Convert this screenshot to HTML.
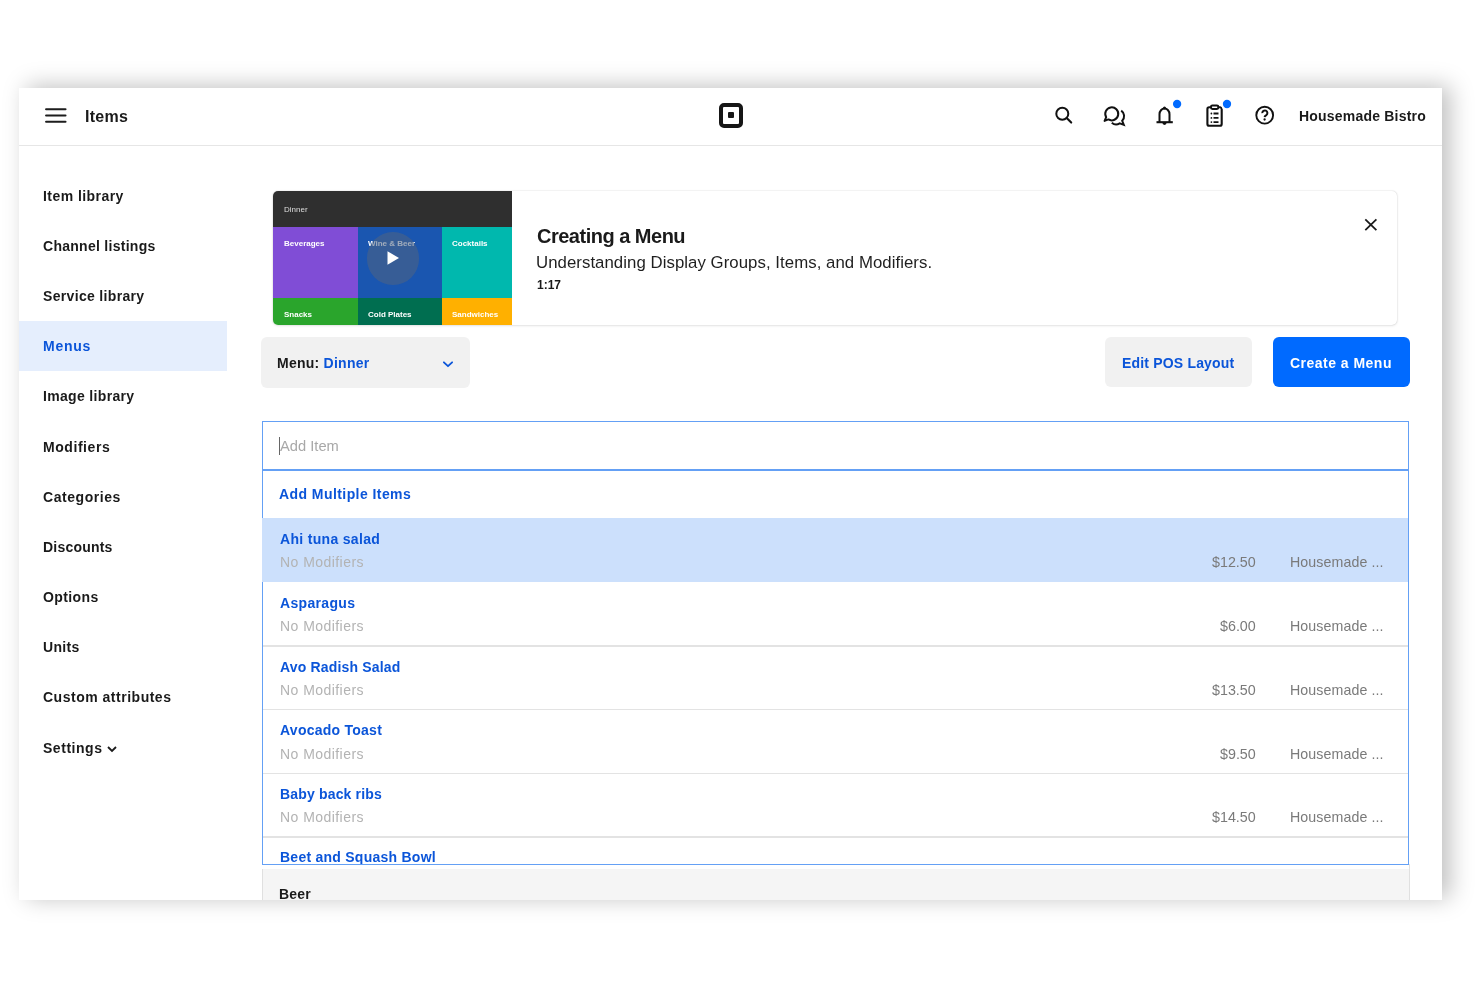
<!DOCTYPE html>
<html><head><meta charset="utf-8"><style>
html,body{margin:0;padding:0;}
body{width:1480px;height:987px;overflow:hidden;position:relative;background:#fff;font-family:"Liberation Sans", sans-serif;}
.t{position:absolute;line-height:1;white-space:nowrap;-webkit-font-smoothing:antialiased;will-change:transform;}
</style></head><body>
<div style="position:absolute;left:18.5px;top:88px;width:1423.5px;height:812px;background:#fff;box-shadow:8px -2px 22px rgba(0,0,0,0.25);"></div>
<div style="position:absolute;left:18.5px;top:144.6px;width:1423.5px;height:1.200000000000017px;background:#e6e6e6;"></div>
<svg style="position:absolute;left:40px;top:100px" width="32" height="30" viewBox="40 100 32 30"><path d="M46.1 109.3H65.5M46.1 115.5H65.5M46.1 121.8H65.5" stroke="#1d1d1d" stroke-width="2.1" stroke-linecap="round"/></svg>
<div class="t" style="left:85.30px;top:108.56px;font-size:16px;font-weight:700;color:#1a1a1a;letter-spacing:0.3px;">Items</div>
<div style="position:absolute;left:718.5px;top:102.8px;width:24.5px;height:25.0px;box-sizing:border-box;border:4.6px solid #161616;border-radius:5px;"></div>
<div style="position:absolute;left:727.8px;top:112.2px;width:6.0px;height:6.200000000000003px;background:#161616;border-radius:1px;"></div>
<svg style="position:absolute;left:1040px;top:92px" width="250" height="50" viewBox="1040 92 250 50" fill="none" stroke="#111" stroke-width="2">
<circle cx="1062.3" cy="113.7" r="6"/>
<path d="M1066.7 118.1 L1071.2 122.6" stroke-linecap="round" stroke-width="2.1"/>
<path d="M1104.6 120.9 L1106.2 117.2 A6.5 6.5 0 1 1 1108.4 119.4 Z" stroke-linejoin="round"/>
<path d="M1121.2 110.6 A6.7 6.7 0 0 1 1122.2 120.8 L1123.8 124.9 L1119.7 123.4 A6.7 6.7 0 0 1 1111.8 122.8"/>
<path d="M1159.5 122.2 V114.2 A5 5.6 0 0 1 1169.5 114.2 V122.2"/>
<path d="M1156.5 122.2 H1172.8" stroke-width="2.1"/>
<circle cx="1164.5" cy="108" r="1.5" fill="#111" stroke="none"/>
<path d="M1162.4 122.8 A2.1 2.1 0 0 0 1166.6 122.8 Z" fill="#111" stroke="none"/>
<rect x="1207.4" y="107.2" width="14.3" height="18.6" rx="1.8" stroke-width="2.1"/>
<rect x="1211" y="105.4" width="7.3" height="3.6" rx="1.4" fill="#fff" stroke-width="2"/>
<circle cx="1211.4" cy="113.5" r="0.9" fill="#111" stroke="none"/>
<circle cx="1211.4" cy="117.9" r="0.9" fill="#111" stroke="none"/>
<circle cx="1211.4" cy="122.1" r="0.9" fill="#111" stroke="none"/>
<path d="M1213.5 113.5h5M1213.5 117.9h5M1213.5 122.1h5" stroke-width="1.9"/>
<circle cx="1264.7" cy="115.2" r="8.4" stroke-width="1.9"/>
<path d="M1262.3 113.2 A2.55 2.55 0 1 1 1266.3 115.1 Q1264.7 116.1 1264.6 117.1" stroke-width="2"/>
<circle cx="1264.6" cy="119.5" r="1.15" fill="#111" stroke="none"/>
<circle cx="1177.1" cy="104" r="6.3" fill="#fff" stroke="none"/>
<circle cx="1177.1" cy="104" r="4.15" fill="#006aff" stroke="none"/>
<circle cx="1227" cy="104" r="6.3" fill="#fff" stroke="none"/>
<circle cx="1227" cy="104" r="4.15" fill="#006aff" stroke="none"/>
</svg>
<div class="t" style="right:54.10px;top:108.55px;font-size:14px;font-weight:700;color:#1a1a1a;letter-spacing:0.2px;">Housemade Bistro</div>
<div style="position:absolute;left:19px;top:321px;width:208.2px;height:50px;background:#e5eefd;"></div>
<div class="t" style="left:43.30px;top:188.65px;font-size:14px;font-weight:700;color:#1a1a1a;letter-spacing:0.44px;">Item library</div>
<div class="t" style="left:43.30px;top:238.82px;font-size:14px;font-weight:700;color:#1a1a1a;letter-spacing:0.28px;">Channel listings</div>
<div class="t" style="left:43.30px;top:288.99px;font-size:14px;font-weight:700;color:#1a1a1a;letter-spacing:0.33px;">Service library</div>
<div class="t" style="left:43.30px;top:339.16px;font-size:14px;font-weight:700;color:#0b55d9;letter-spacing:0.72px;">Menus</div>
<div class="t" style="left:43.30px;top:389.33px;font-size:14px;font-weight:700;color:#1a1a1a;letter-spacing:0.33px;">Image library</div>
<div class="t" style="left:43.30px;top:439.50px;font-size:14px;font-weight:700;color:#1a1a1a;letter-spacing:0.56px;">Modifiers</div>
<div class="t" style="left:43.30px;top:489.67px;font-size:14px;font-weight:700;color:#1a1a1a;letter-spacing:0.56px;">Categories</div>
<div class="t" style="left:43.30px;top:539.84px;font-size:14px;font-weight:700;color:#1a1a1a;letter-spacing:0.21px;">Discounts</div>
<div class="t" style="left:43.30px;top:590.01px;font-size:14px;font-weight:700;color:#1a1a1a;letter-spacing:0.38px;">Options</div>
<div class="t" style="left:43.30px;top:640.18px;font-size:14px;font-weight:700;color:#1a1a1a;letter-spacing:0.32px;">Units</div>
<div class="t" style="left:43.30px;top:690.35px;font-size:14px;font-weight:700;color:#1a1a1a;letter-spacing:0.51px;">Custom attributes</div>
<div class="t" style="left:43.30px;top:740.52px;font-size:14px;font-weight:700;color:#1a1a1a;letter-spacing:0.53px;">Settings</div>
<svg style="position:absolute;left:106px;top:744px" width="12" height="10" viewBox="0 0 12 10"><path d="M2 3 L6 7 L10 3" fill="none" stroke="#1a1a1a" stroke-width="1.8"/></svg>
<div style="position:absolute;left:273px;top:190.6px;width:1123.6px;height:134.4px;background:#fff;border-radius:5px;box-shadow:0 0 1.5px rgba(0,0,0,0.22),0 1px 3px rgba(0,0,0,0.08);"></div>
<div style="position:absolute;left:273.4px;top:190.9px;width:238.4px;height:134.1px;border-radius:5px 0 0 5px;overflow:hidden;">
<div style="position:absolute;left:0.00px;top:0.00px;width:238.40px;height:36.20px;background:#2f2f2f"></div>
<div style="position:absolute;left:0.00px;top:36.20px;width:84.70px;height:70.90px;background:#804dd6"></div>
<div style="position:absolute;left:84.70px;top:36.20px;width:84.30px;height:70.90px;background:#1a56b0"></div>
<div style="position:absolute;left:169.00px;top:36.20px;width:69.40px;height:70.90px;background:#00b8ae"></div>
<div style="position:absolute;left:0.00px;top:107.10px;width:84.70px;height:27.00px;background:#2aa52c"></div>
<div style="position:absolute;left:84.70px;top:107.10px;width:84.30px;height:27.00px;background:#006e50"></div>
<div style="position:absolute;left:169.00px;top:107.10px;width:69.40px;height:27.00px;background:#ffb000"></div>
</div>
<div class="t" style="left:283.60px;top:206.43px;font-size:8px;font-weight:400;color:#ddd;letter-spacing:0px;">Dinner</div>
<div class="t" style="left:283.60px;top:239.83px;font-size:8px;font-weight:700;color:#fff;letter-spacing:0px;">Beverages</div>
<div class="t" style="left:367.60px;top:239.83px;font-size:8px;font-weight:700;color:#fff;letter-spacing:0px;">Wine &amp; Beer</div>
<div class="t" style="left:452.00px;top:239.83px;font-size:8px;font-weight:700;color:#fff;letter-spacing:0px;">Cocktails</div>
<div class="t" style="left:283.60px;top:311.23px;font-size:8px;font-weight:700;color:#fff;letter-spacing:0px;">Snacks</div>
<div class="t" style="left:367.60px;top:311.23px;font-size:8px;font-weight:700;color:#fff;letter-spacing:0px;">Cold Plates</div>
<div class="t" style="left:452.00px;top:311.23px;font-size:8px;font-weight:700;color:#fff;letter-spacing:0px;">Sandwiches</div>
<div style="position:absolute;left:366.5px;top:231.8px;width:52.80000000000001px;height:52.80000000000001px;background:rgba(80,100,130,0.55);border-radius:50%;"></div>
<svg style="position:absolute;left:385px;top:250px" width="16" height="16" viewBox="0 0 16 16"><path d="M2.5 1.2 L14 8 L2.5 14.8 Z" fill="#fff"/></svg>
<div class="t" style="left:537.00px;top:225.97px;font-size:20px;font-weight:700;color:#1a1a1a;letter-spacing:-0.5px;">Creating a Menu</div>
<div class="t" style="left:536.30px;top:255.38px;font-size:16.8px;font-weight:400;color:#1f1f1f;letter-spacing:0.05px;">Understanding Display Groups, Items, and Modifiers.</div>
<div class="t" style="left:537.20px;top:278.64px;font-size:12px;font-weight:700;color:#1a1a1a;letter-spacing:0px;">1:17</div>
<svg style="position:absolute;left:1362px;top:216px" width="18" height="18" viewBox="0 0 18 18"><path d="M3.3 3.4 L14.4 14.1 M14.4 3.4 L3.3 14.1" stroke="#1a1a1a" stroke-width="1.8"/></svg>
<div style="position:absolute;left:260.8px;top:337.1px;width:209.09999999999997px;height:50.599999999999966px;background:#f1f1f1;border-radius:6px;"></div>
<div class="t" style="left:277.10px;top:356.25px;font-size:14px;font-weight:700;color:#1a1a1a;letter-spacing:0.25px;">Menu: <span style="color:#0b55d9">Dinner</span></div>
<svg style="position:absolute;left:441px;top:358px" width="14" height="12" viewBox="0 0 14 12"><path d="M2.9 4.3 L7 8.2 L11.1 4.3" fill="none" stroke="#0b55d9" stroke-width="1.8" stroke-linecap="round" stroke-linejoin="round"/></svg>
<div style="position:absolute;left:1105.2px;top:337.1px;width:146.5px;height:50.39999999999998px;background:#f1f1f1;border-radius:6px;"></div>
<div class="t" style="left:1121.70px;top:356.25px;font-size:14px;font-weight:700;color:#0b55d9;letter-spacing:0.18px;">Edit POS Layout</div>
<div style="position:absolute;left:1273.1px;top:337.1px;width:136.5px;height:50.39999999999998px;background:#006aff;border-radius:6px;"></div>
<div class="t" style="left:1289.90px;top:356.25px;font-size:14px;font-weight:700;color:#fff;letter-spacing:0.48px;">Create a Menu</div>
<div style="position:absolute;left:261.5px;top:864px;width:1148.0px;height:36px;background:#f5f5f5;border-left:1px solid #e0e0e0;border-right:1px solid #e0e0e0;box-sizing:border-box;"></div>
<div style="position:absolute;left:262px;top:864px;width:1147px;height:5px;background:#fff;"></div>
<div class="t" style="left:279.00px;top:887.45px;font-size:14px;font-weight:700;color:#1a1a1a;letter-spacing:0.2px;">Beer</div>
<div style="position:absolute;left:261.5px;top:421px;width:1147.8px;height:444px;background:#fff;box-sizing:border-box;border:1.6px solid #64a0f5;border-top-width:1.8px;"></div>
<div style="position:absolute;left:261.5px;top:469.3px;width:1147.0px;height:1.6999999999999886px;background:#64a0f5;"></div>
<div style="position:absolute;left:279.4px;top:437px;width:1.1000000000000227px;height:17.600000000000023px;background:#666;"></div>
<div class="t" style="left:280.00px;top:438.56px;font-size:14.7px;font-weight:400;color:#a8a8a8;letter-spacing:0px;">Add Item</div>
<div class="t" style="left:279.30px;top:486.85px;font-size:14px;font-weight:700;color:#0b55d9;letter-spacing:0.43px;">Add Multiple Items</div>
<div style="position:absolute;left:262px;top:518.4px;width:1146px;height:64.0px;background:#cce0fc;"></div>
<div class="t" style="left:279.60px;top:531.95px;font-size:14px;font-weight:700;color:#0b55d9;letter-spacing:0.32px;">Ahi tuna salad</div>
<div class="t" style="left:279.60px;top:555.15px;font-size:14px;font-weight:400;color:#b3b3b3;letter-spacing:0.45px;">No Modifiers</div>
<div class="t" style="right:223.80px;top:555.10px;font-size:14.3px;font-weight:400;color:#7a7a7a;letter-spacing:0px;">$12.50</div>
<div class="t" style="left:1289.90px;top:555.18px;font-size:14.2px;font-weight:400;color:#7a7a7a;letter-spacing:0.1px;">Housemade ...</div>
<div class="t" style="left:279.60px;top:595.75px;font-size:14px;font-weight:700;color:#0b55d9;letter-spacing:0.33px;">Asparagus</div>
<div class="t" style="left:279.60px;top:618.95px;font-size:14px;font-weight:400;color:#b3b3b3;letter-spacing:0.45px;">No Modifiers</div>
<div class="t" style="right:223.80px;top:618.90px;font-size:14.3px;font-weight:400;color:#7a7a7a;letter-spacing:0px;">$6.00</div>
<div class="t" style="left:1289.90px;top:618.98px;font-size:14.2px;font-weight:400;color:#7a7a7a;letter-spacing:0.1px;">Housemade ...</div>
<div style="position:absolute;left:262.5px;top:645.4px;width:1145.5px;height:1.2000000000000455px;background:#e3e3e3;"></div>
<div class="t" style="left:279.60px;top:659.55px;font-size:14px;font-weight:700;color:#0b55d9;letter-spacing:0.17px;">Avo Radish Salad</div>
<div class="t" style="left:279.60px;top:682.75px;font-size:14px;font-weight:400;color:#b3b3b3;letter-spacing:0.45px;">No Modifiers</div>
<div class="t" style="right:223.80px;top:682.70px;font-size:14.3px;font-weight:400;color:#7a7a7a;letter-spacing:0px;">$13.50</div>
<div class="t" style="left:1289.90px;top:682.78px;font-size:14.2px;font-weight:400;color:#7a7a7a;letter-spacing:0.1px;">Housemade ...</div>
<div style="position:absolute;left:262.5px;top:709.1999999999999px;width:1145.5px;height:1.2000000000000455px;background:#e3e3e3;"></div>
<div class="t" style="left:279.60px;top:723.35px;font-size:14px;font-weight:700;color:#0b55d9;letter-spacing:0.25px;">Avocado Toast</div>
<div class="t" style="left:279.60px;top:746.55px;font-size:14px;font-weight:400;color:#b3b3b3;letter-spacing:0.45px;">No Modifiers</div>
<div class="t" style="right:223.80px;top:746.50px;font-size:14.3px;font-weight:400;color:#7a7a7a;letter-spacing:0px;">$9.50</div>
<div class="t" style="left:1289.90px;top:746.58px;font-size:14.2px;font-weight:400;color:#7a7a7a;letter-spacing:0.1px;">Housemade ...</div>
<div style="position:absolute;left:262.5px;top:772.9999999999999px;width:1145.5px;height:1.2000000000000455px;background:#e3e3e3;"></div>
<div class="t" style="left:279.60px;top:787.15px;font-size:14px;font-weight:700;color:#0b55d9;letter-spacing:0.17px;">Baby back ribs</div>
<div class="t" style="left:279.60px;top:810.35px;font-size:14px;font-weight:400;color:#b3b3b3;letter-spacing:0.45px;">No Modifiers</div>
<div class="t" style="right:223.80px;top:810.30px;font-size:14.3px;font-weight:400;color:#7a7a7a;letter-spacing:0px;">$14.50</div>
<div class="t" style="left:1289.90px;top:810.38px;font-size:14.2px;font-weight:400;color:#7a7a7a;letter-spacing:0.1px;">Housemade ...</div>
<div style="position:absolute;left:262.5px;top:836.4px;width:1145.5px;height:1.2000000000000455px;background:#e3e3e3;"></div>
<div style="position:absolute;left:263px;top:838px;width:1145px;height:25.5px;overflow:hidden;">
<div class="t" style="left:16.6px;top:12.15px;font-size:14px;font-weight:700;color:#0b55d9;letter-spacing:0.25px;">Beet and Squash Bowl</div>
</div>
</body></html>
